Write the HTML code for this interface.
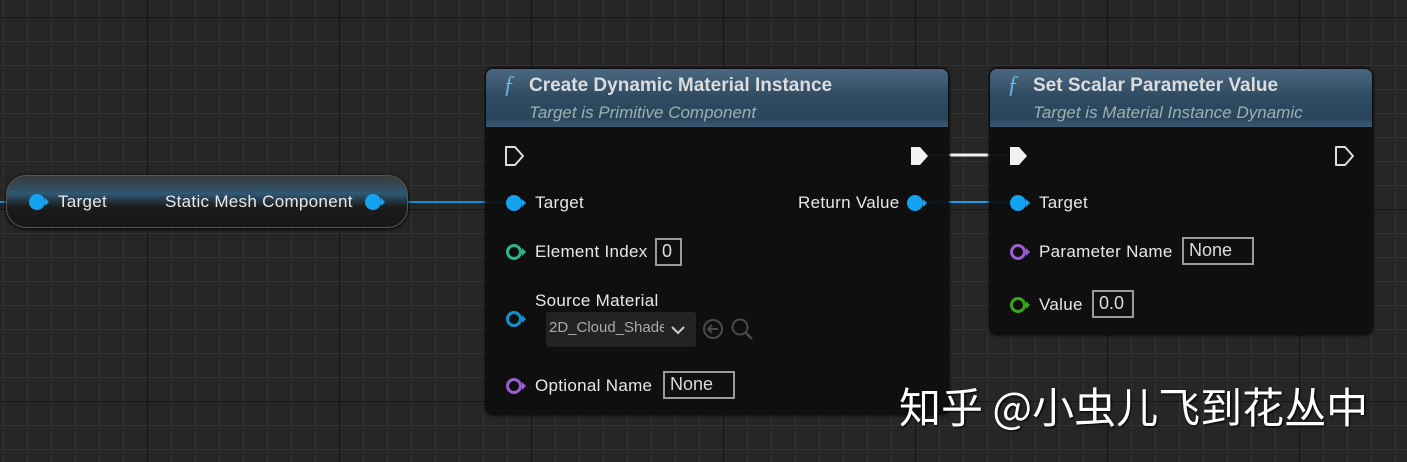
<!DOCTYPE html>
<html><head><meta charset="utf-8"><style>
*{margin:0;padding:0;box-sizing:border-box}
body{width:1407px;height:462px;overflow:hidden;position:relative;font-family:"Liberation Sans","Noto Sans CJK SC",sans-serif;
background-color:#262626;
background-image:
linear-gradient(90deg,#161616 0 1px,transparent 1px),
linear-gradient(0deg,#161616 0 1px,transparent 1px),
linear-gradient(90deg,#333 0 1px,transparent 1px),
linear-gradient(0deg,#333 0 1px,transparent 1px);
background-size:192px 192px,192px 192px,24px 24px,24px 24px;
background-position:147px 0,0 18px,3px 0,0 18px;}
.a{position:absolute}
.t{position:absolute;color:#e8e8e8;font-size:17px;white-space:nowrap;letter-spacing:0.3px}
.node{position:absolute;background:rgba(14,14,14,0.93);border-radius:7px;box-shadow:0 0 3px 1px #000;overflow:hidden}
.hdr{position:absolute;left:0;top:0;right:0;height:58px;background:linear-gradient(180deg,#4a6880 0%,#2e4a61 50%,#2a465d 85%,#3a5a73 100%)}
.ttl{position:absolute;font-weight:bold;color:#dcdcdc;font-size:19px;white-space:nowrap}
.sub{position:absolute;font-style:italic;color:#9fb0ac;font-size:17px;white-space:nowrap}
.f{position:absolute;font-style:italic;font-family:"Liberation Serif",serif;color:#6ab3e8;font-size:24px}
.box{position:absolute;border:2px solid #9a9a9a;color:#ddd;font-size:18px;padding-left:5px;line-height:22px;height:28px}
</style></head><body>
<svg class="a" style="left:0;top:0" width="1407" height="462">
<line x1="0" y1="202" x2="30" y2="202" stroke="#0f8ed8" stroke-width="2"/>
<line x1="380" y1="202" x2="507" y2="202" stroke="#0f8ed8" stroke-width="2"/>
<line x1="928" y1="202" x2="1012" y2="202" stroke="#0f8ed8" stroke-width="2"/>
<line x1="928" y1="155" x2="1012" y2="155" stroke="#777" stroke-width="2"/>
<line x1="950" y1="155" x2="988" y2="155" stroke="#f2f2f2" stroke-width="3"/>
<line x1="950" y1="202" x2="988" y2="202" stroke="#1a9fe8" stroke-width="2"/>
</svg>

<div class="a" style="left:6px;top:175px;width:402px;height:53px;border-radius:20px;background:linear-gradient(180deg,#3a3a3a 0%,#2f5873 35%,#1c1c1c 60%,#161616 100%);box-shadow:0 1px 4px #000;border:1px solid #555"></div>
<svg class="a" style="left:26px;top:192px" width="24" height="20"><circle cx="11" cy="10" r="8" fill="#13a3f0"/><path d="M19 6 L23 10 L19 14Z" fill="#13a3f0"/></svg>
<div class="t" style="left:58px;top:192px">Target</div>
<div class="t" style="left:165px;top:192px">Static Mesh Component</div>
<svg class="a" style="left:362px;top:192px" width="24" height="20"><circle cx="11" cy="10" r="8" fill="#13a3f0"/><path d="M19 6 L23 10 L19 14Z" fill="#13a3f0"/></svg>

<div class="node" style="left:486px;top:69px;width:462px;height:345px"><div class="hdr"></div></div>
<div class="f" style="left:503px;top:72px">ƒ</div>
<div class="ttl" style="left:529px;top:75px">Create Dynamic Material Instance</div>
<div class="sub" style="left:529px;top:103px">Target is Primitive Component</div>
<svg class="a" style="left:503px;top:144px" width="24" height="24"><path d="M3 3 H12 L20 12 L12 21 H3Z" fill="none" stroke="#ddd" stroke-width="2" stroke-linejoin="round"/></svg>
<svg class="a" style="left:908px;top:144px" width="24" height="24"><path d="M3 3 H12 L20 12 L12 21 H3Z" fill="#f2f2f2"/></svg>
<svg class="a" style="left:503px;top:193px" width="24" height="20"><circle cx="11" cy="10" r="8" fill="#13a3f0"/><path d="M19 6 L23 10 L19 14Z" fill="#13a3f0"/></svg>
<div class="t" style="left:535px;top:193px">Target</div>
<div class="t" style="left:798px;top:193px">Return Value</div>
<svg class="a" style="left:904px;top:193px" width="24" height="20"><circle cx="11" cy="10" r="8" fill="#13a3f0"/><path d="M19 6 L23 10 L19 14Z" fill="#13a3f0"/></svg>
<svg class="a" style="left:503px;top:242px" width="24" height="20"><circle cx="11" cy="10" r="6.5" fill="none" stroke="#2fb58e" stroke-width="3"/><path d="M19 6 L23 10 L19 14Z" fill="#2fb58e"/></svg>
<div class="t" style="left:535px;top:242px">Element Index</div>
<div class="box" style="left:655px;top:238px;width:27px">0</div>
<div class="t" style="left:535px;top:291px">Source Material</div>
<svg class="a" style="left:503px;top:309px" width="24" height="20"><circle cx="11" cy="10" r="6.5" fill="none" stroke="#1591cf" stroke-width="3"/><path d="M19 6 L23 10 L19 14Z" fill="#1591cf"/></svg>
<div class="a" style="left:546px;top:312px;width:150px;height:35px;background:#232323;border-radius:3px"></div>
<div class="a" style="left:549px;top:319px;width:115px;overflow:hidden;color:#aaa;font-size:15px;white-space:nowrap">2D_Cloud_Shader</div>
<svg class="a" style="left:668px;top:320px" width="20" height="20"><path d="M4 7 L10 13 L16 7" fill="none" stroke="#ccc" stroke-width="2"/></svg>
<svg class="a" style="left:702px;top:317px" width="56" height="26"><circle cx="11" cy="12" r="9" fill="none" stroke="#4a4a4a" stroke-width="2"/><path d="M16 12 H7 M10 8 L6 12 L10 16" fill="none" stroke="#4a4a4a" stroke-width="2"/><circle cx="38" cy="10" r="7.5" fill="none" stroke="#4a4a4a" stroke-width="2"/><path d="M43.5 15.5 L50 22" stroke="#4a4a4a" stroke-width="2.5"/></svg>
<svg class="a" style="left:503px;top:376px" width="24" height="20"><circle cx="11" cy="10" r="6.5" fill="none" stroke="#9b5fd0" stroke-width="3"/><path d="M19 6 L23 10 L19 14Z" fill="#9b5fd0"/></svg>
<div class="t" style="left:535px;top:376px">Optional Name</div>
<div class="box" style="left:663px;top:371px;width:72px">None</div>

<div class="node" style="left:990px;top:69px;width:382px;height:265px"><div class="hdr"></div></div>
<div class="f" style="left:1007px;top:72px">ƒ</div>
<div class="ttl" style="left:1033px;top:75px">Set Scalar Parameter Value</div>
<div class="sub" style="left:1033px;top:103px">Target is Material Instance Dynamic</div>
<svg class="a" style="left:1007px;top:144px" width="24" height="24"><path d="M3 3 H12 L20 12 L12 21 H3Z" fill="#f2f2f2"/></svg>
<svg class="a" style="left:1333px;top:144px" width="24" height="24"><path d="M3 3 H12 L20 12 L12 21 H3Z" fill="none" stroke="#ddd" stroke-width="2" stroke-linejoin="round"/></svg>
<svg class="a" style="left:1007px;top:193px" width="24" height="20"><circle cx="11" cy="10" r="8" fill="#13a3f0"/><path d="M19 6 L23 10 L19 14Z" fill="#13a3f0"/></svg>
<div class="t" style="left:1039px;top:193px">Target</div>
<svg class="a" style="left:1007px;top:242px" width="24" height="20"><circle cx="11" cy="10" r="6.5" fill="none" stroke="#9b5fd0" stroke-width="3"/><path d="M19 6 L23 10 L19 14Z" fill="#9b5fd0"/></svg>
<div class="t" style="left:1039px;top:242px">Parameter Name</div>
<div class="box" style="left:1182px;top:237px;width:72px">None</div>
<svg class="a" style="left:1007px;top:295px" width="24" height="20"><circle cx="11" cy="10" r="6.5" fill="none" stroke="#3aa51c" stroke-width="3"/><path d="M19 6 L23 10 L19 14Z" fill="#3aa51c"/></svg>
<div class="t" style="left:1039px;top:295px">Value</div>
<div class="box" style="left:1092px;top:290px;width:42px">0.0</div>

<div class="a" style="left:899px;top:375px;color:#fff;font-size:42px;white-space:nowrap;font-family:'Noto Sans CJK SC','Liberation Sans',sans-serif;text-shadow:1px 1px 2px #000">知乎 @小虫儿飞到花丛中</div>
</body></html>
